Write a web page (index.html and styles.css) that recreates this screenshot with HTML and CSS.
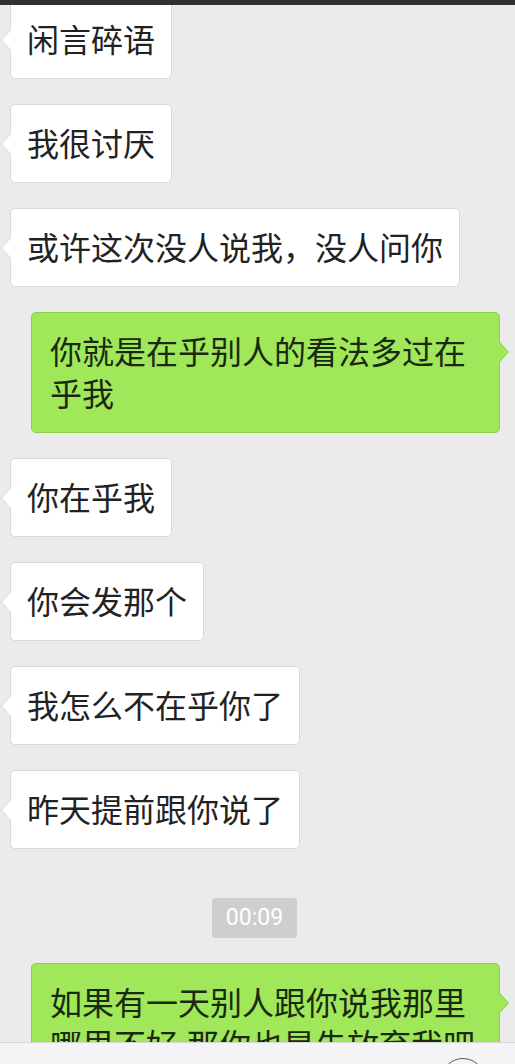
FILE: index.html
```html
<!DOCTYPE html>
<html lang="zh">
<head>
<meta charset="utf-8">
<link rel="stylesheet" href="styles.css">
</head>
<body>
<div class="statusbar"></div>
<div class="chat">
  <div class="row left"><div class="bubble">闲言碎语</div></div>
  <div class="row left"><div class="bubble">我很讨厌</div></div>
  <div class="row left"><div class="bubble">或许这次没人说我，没人问你</div></div>
  <div class="row right"><div class="bubble green">你就是在乎别人的看法多过在乎我</div></div>
  <div class="row left"><div class="bubble">你在乎我</div></div>
  <div class="row left"><div class="bubble">你会发那个</div></div>
  <div class="row left"><div class="bubble">我怎么不在乎你了</div></div>
  <div class="row left"><div class="bubble">昨天提前跟你说了</div></div>
  <div class="row time"><span class="pill">00:09</span></div>
  <div class="row right"><div class="bubble green">如果有一天别人跟你说我那里哪里不好,那你也是先放弃我吧</div></div>
</div>
<div class="inputbar"><span class="voice"></span></div>
</body>
</html>
```
FILE: styles.css
```css
html, body {
  margin: 0;
  padding: 0;
}
body {
  width: 515px;
  height: 1064px;
  overflow: hidden;
  background: #ebebeb;
  font-family: "Noto Sans CJK SC", "Noto Sans", sans-serif;
  position: relative;
}
.statusbar {
  position: absolute;
  top: 0;
  left: 0;
  right: 0;
  height: 5px;
  background: #2e3235;
  z-index: 5;
}
.chat {
  display: flex;
  flex-direction: column;
  gap: 25px;
}
.row {
  display: flex;
}
.row.left {
  padding-left: 10px;
  justify-content: flex-start;
}
.row.right {
  padding-right: 15px;
  justify-content: flex-end;
}
.bubble {
  position: relative;
  box-sizing: border-box;
  max-width: 469px;
  background: #ffffff;
  border: 1px solid #d9d9d9;
  border-radius: 5px;
  padding: 16px 16px 19px 16px;
  font-size: 32px;
  line-height: 42px;
  color: #222222;
}
.bubble::before,
.bubble::after {
  content: "";
  position: absolute;
  top: 29px;
  width: 0;
  height: 0;
  border-top: 10px solid transparent;
  border-bottom: 10px solid transparent;
}
.row.left .bubble::before {
  left: -10px;
  border-right: 9px solid #d9d9d9;
}
.row.left .bubble::after {
  left: -9px;
  border-right: 9px solid #ffffff;
}
.bubble.green {
  background: #a0e75a;
  border-color: #8ccf4d;
  padding-left: 18px;
  padding-right: 16px;
  color: #1a2a10;
}
.row.right .bubble::before {
  right: -10px;
  border-left: 9px solid #8ccf4d;
}
.row.right .bubble::after {
  right: -9px;
  border-left: 9px solid #a0e75a;
}
.row.time {
  justify-content: center;
  margin-top: 24px;
  padding-right: 6px;
}
.pill {
  display: inline-block;
  width: 85px;
  height: 40px;
  line-height: 40px;
  text-align: center;
  background: #cecece;
  color: #ffffff;
  border-radius: 3px;
  font-family: Roboto, "Noto Sans", sans-serif;
  font-size: 23px;
}
.inputbar {
  position: absolute;
  left: 0;
  right: 0;
  top: 1042px;
  bottom: 0;
  background: #f4f4f6;
  border-top: 1px solid #d6d6d6;
  z-index: 5;
}
.voice {
  position: absolute;
  left: 441px;
  top: 15px;
  width: 42px;
  height: 42px;
  border: 1.5px solid #5c5c5c;
  border-radius: 50%;
}
```
